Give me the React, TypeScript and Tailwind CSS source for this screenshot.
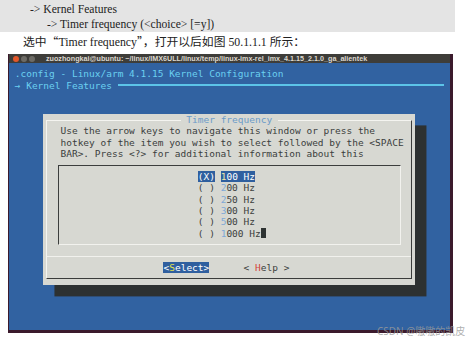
import React from 'react';

const mono = { fontFamily: '"DejaVu Sans Mono", monospace' };

function Row({ children, className = '' }: { children?: React.ReactNode; className?: string }) {
  return <div className={`h-[11.4px] leading-[11.4px] whitespace-pre ${className}`}>{children}</div>;
}

const items = ['200 Hz', '250 Hz', '300 Hz', '500 Hz', '1000 Hz'];
const cjk = { fontFamily: '"Noto Sans CJK SC", sans-serif' };

export default function App() {
  return (
    <div className="w-[474px] h-[341px] bg-white relative overflow-hidden">
      {/* document excerpt */}
      <div className="w-[455px] h-[32px] bg-[#e4e4e4] pt-[1.5px] text-[11.6px] text-[#222]" style={{ fontFamily: '"Liberation Serif", serif' }}>
        <div className="h-[15px] leading-[15px] pl-[30px]">-&gt; Kernel Features</div>
        <div className="h-[15px] leading-[15px] pl-[47px]">-&gt; Timer frequency (&lt;choice&gt; [=y])</div>
      </div>
      <div
        className="h-[17px] leading-[17px] pl-[23px] text-[11.8px] text-[#222] whitespace-nowrap"
        style={{ fontFamily: '"Liberation Serif", "Noto Sans CJK SC", serif' }}
      >
        选中<span style={cjk}>“</span>Timer frequency<span style={cjk}>”，</span>打开以后如图 50.1.1.1 所示<span style={cjk}>：</span>
      </div>

      {/* terminal window */}
      <div className="mt-[5px] ml-[8px] w-[445px] border-l border-r-[3px] border-b-[3px] border-[#3b1a2c]">
        <div className="h-[9px] bg-[#3e3d39] flex items-center gap-[2px] pl-[4px]">
          <span className="w-[6px] h-[6px] rounded-full bg-[#e2572a]" />
          <span className="w-[6px] h-[6px] rounded-full bg-[#6d6b65]" />
          <span className="w-[6px] h-[6px] rounded-full bg-[#6d6b65]" />
          <span
            className="ml-[9px] text-[7.2px] leading-[9px] font-bold text-[#dcd8cf] whitespace-nowrap"
            style={{ fontFamily: '"Liberation Sans", sans-serif' }}
          >
            zuozhongkai@ubuntu: ~/linux/IMX6ULL/linux/temp/linux-imx-rel_imx_4.1.15_2.1.0_ga_alientek
          </span>
        </div>

        <div className="h-[267px] bg-[#3162a1] pt-[5.3px] text-[9.5px]" style={mono}>
          <Row className="text-[#6bd0f0]"> .config - Linux/arm 4.1.15 Kernel Configuration</Row>
          <div className="h-[11.4px] flex items-center text-[#6bd0f0] whitespace-pre leading-[11.4px]">
            <span className="w-[108.7px] shrink-0"> → Kernel Features</span>
            <span className="block w-[326px] h-[2px] shrink-0 bg-[#5cc4e8]" />
          </div>
          <div className="h-[22.8px]" />

          {/* dialog */}
          <div className="ml-[34.32px] w-[371.8px] h-[171px] bg-[#d7d8d2] shadow-[11.44px_11.4px_0_0_#2d3131] pt-[5.7px] text-[#3b3e3d]">
            <div className="mx-[2.86px] border border-t-[#f4f4f0] border-l-[#f4f4f0] border-r-[#3a3c3b] border-b-[#3a3c3b]">
              <div className="-mt-[6.7px] h-[11.4px] leading-[11.4px] flex justify-center">
                <span className="bg-[#d7d8d2] text-[#6b9bc8] whitespace-pre"> Timer frequency </span>
              </div>
              <div className="pl-[13.3px]">
                <Row>Use the arrow keys to navigate this window or press the</Row>
                <Row>hotkey of the item you wish to select followed by the &lt;SPACE</Row>
                <Row>BAR&gt;. Press &lt;?&gt; for additional information about this</Row>
              </div>

              {/* list box */}
              <div className="mt-[5.7px] mb-[5.7px] mx-[10.5px] h-[79.8px] border border-t-[#3c3e3d] border-l-[#3c3e3d] border-r-[#f2f2ee] border-b-[#f2f2ee] pt-[4.7px] pl-[139.1px]">
                <Row>
                  <span className="bg-[#2f5f9f] text-white">(X)</span>
                  {' '}
                  <span className="bg-[#2f5f9f] text-white">
                    <span className="text-[#ece7a8]">1</span>00 Hz
                  </span>
                </Row>
                {items.map((it, i) => (
                  <Row key={it} className="flex">
                    <span>( ) </span>
                    <span className="text-[#7ea8d6]">{it[0]}</span>
                    <span>{it.slice(1)}</span>
                    {i === items.length - 1 && <span className="w-[5.72px] h-[10px] mt-[0.7px] bg-[#2e3332]" />}
                  </Row>
                ))}
              </div>

              <div className="h-[11.4px] flex items-center">
                <div className="flex-1 h-px bg-[#f1f1ed]" />
              </div>
              <Row className="pl-[116.3px]">
                <span className="bg-[#2f5f9f] text-white">
                  &lt;<span className="text-[#e3e24c]">S</span>elect&gt;
                </span>
                {'      '}
                <span>
                  &lt; <span className="text-[#d4433a]">H</span>elp &gt;
                </span>
              </Row>
              <div className="h-[4.7px]" />
            </div>
          </div>
        </div>
      </div>

      <div
        className="absolute left-[377px] top-[324px] text-[10px] leading-[14px] text-[#9a9a9a]/80 whitespace-nowrap"
        style={{ fontFamily: '"Noto Sans", "Noto Sans CJK SC", sans-serif' }}
      >
        CSDN @嗷嗷的凯皮
      </div>
    </div>
  );
}
